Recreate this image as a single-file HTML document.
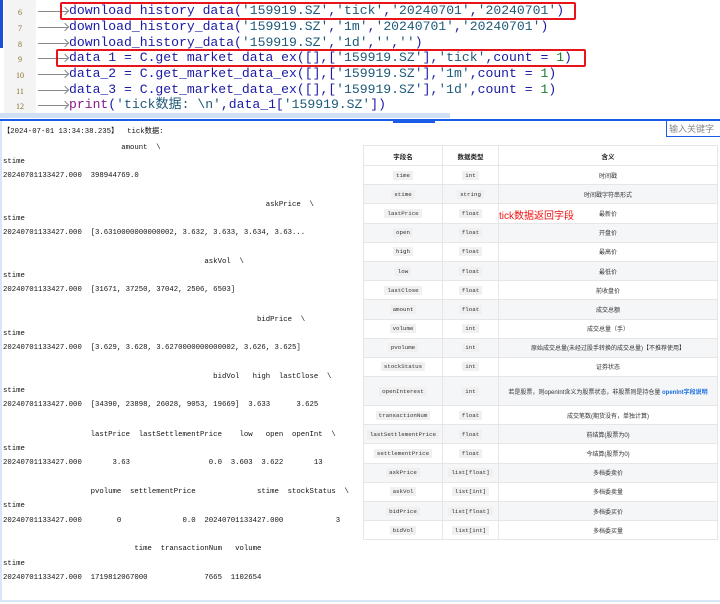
<!DOCTYPE html>
<html><head><meta charset="utf-8"><style>
*{margin:0;padding:0;box-sizing:border-box}
body{width:720px;height:604px;position:relative;background:#fff;overflow:hidden;font-family:"Liberation Mono","Noto Sans CJK SC",monospace}
.ln{position:absolute;left:4px;width:32px;text-align:center;font-size:8px;color:#8a6d2a;font-family:"Liberation Serif",serif}
.ar{position:absolute;left:38px;width:30px;height:1px;background:#888}
.ar:after{content:"";position:absolute;right:0;top:-3px;width:5px;height:5px;border-top:1px solid #888;border-right:1px solid #888;transform:rotate(45deg)}
.cd{position:absolute;left:69px;font-size:13.1px;color:#1a1aa6;white-space:pre;line-height:16px}
.s{color:#1d5a7a}.p{color:#8b1a8b}.n{color:#1a7a3a}
.o{position:absolute;left:3px;font-size:7.3px;color:#111;white-space:pre;line-height:9px;font-family:"Liberation Mono","Noto Sans CJK SC",monospace}
table{position:absolute;left:363px;top:145px;width:355px;border-collapse:collapse;font-size:6px;font-family:"Liberation Sans","Noto Sans CJK SC",sans-serif;color:#333;text-align:center}
td,th{border:1px solid #e6e6e6;height:19.2px;padding:0 2px}
th{font-size:6.5px;font-weight:bold;color:#222;height:20px}
tr:nth-child(odd) td{background:#f5f6f8}
td c{background:#f0f0f0;padding:1px 3px;font-family:"Liberation Mono",monospace;font-size:5.8px}
</style></head><body>
<div style="position:absolute;left:0;top:0;width:720px;height:118px;background:#fff"></div>
<div style="position:absolute;left:4px;top:0;width:32px;height:113px;background:#f4f4f4"></div>
<div style="position:absolute;left:0;top:0;width:3px;height:48px;background:#1a4fd8"></div>
<div style="position:absolute;left:0;top:113px;width:450px;height:5px;background:#cfe0f5"></div>
<div style="position:absolute;left:0;top:119px;width:720px;height:2px;background:#1a5ce8"></div>
<div style="position:absolute;left:393px;top:119px;width:42px;height:4px;background:#1a5ce8"></div>
<div style="position:absolute;left:0;top:121px;width:2px;height:480px;background:#d8e6f7"></div>
<div style="position:absolute;left:0;top:600px;width:720px;height:2px;background:#d8e6f7"></div>
<div style="position:absolute;left:666px;top:120px;width:56px;height:17px;border:1px solid #1a5ce8;font-size:9px;color:#888;font-family:'Noto Sans CJK SC',sans-serif;line-height:15px;padding-left:2px">输入关键字</div>

<div class="ln" style="top:8px">6</div><div class="ar" style="top:11px"></div>
<div class="ln" style="top:24px">7</div><div class="ar" style="top:27px"></div>
<div class="ln" style="top:40px">8</div><div class="ar" style="top:43px"></div>
<div class="ln" style="top:55px">9</div><div class="ar" style="top:58px"></div>
<div class="ln" style="top:71px">10</div><div class="ar" style="top:74px"></div>
<div class="ln" style="top:87px">11</div><div class="ar" style="top:90px"></div>
<div class="ln" style="top:102px">12</div><div class="ar" style="top:105px"></div>

<div class="cd" style="top:3px">download history data(<span class="s">'159919.SZ'</span>,<span class="s">'tick'</span>,<span class="s">'20240701'</span>,<span class="s">'20240701'</span>)</div>
<div class="cd" style="top:19px">download_history_data(<span class="s">'159919.SZ'</span>,<span class="s">'1m'</span>,<span class="s">'20240701'</span>,<span class="s">'20240701'</span>)</div>
<div class="cd" style="top:35px">download_history_data(<span class="s">'159919.SZ'</span>,<span class="s">'1d'</span>,<span class="s">''</span>,<span class="s">''</span>)</div>
<div class="cd" style="top:50px">data 1 = C.get market data ex([],[<span class="s">'159919.SZ'</span>],<span class="s">'tick'</span>,count = <span class="n">1</span>)</div>
<div class="cd" style="top:66px">data_2 = C.get_market_data_ex([],[<span class="s">'159919.SZ'</span>],<span class="s">'1m'</span>,count = <span class="n">1</span>)</div>
<div class="cd" style="top:82px">data_3 = C.get_market_data_ex([],[<span class="s">'159919.SZ'</span>],<span class="s">'1d'</span>,count = <span class="n">1</span>)</div>
<div class="cd" style="top:97px"><span class="p">print</span>(<span class="s">'tick数据: \n'</span>,data_1[<span class="s">'159919.SZ'</span>])</div>
<div style="position:absolute;left:60px;top:2px;width:516px;height:18px;border:2px solid #e8141a;border-radius:2px"></div>
<div style="position:absolute;left:56px;top:49px;width:530px;height:18px;border:2px solid #e8141a;border-radius:2px"></div>

<div class="o" style="top:128px">【2024-07-01 13:34:38.235】  tick数据:</div>
<div class="o" style="top:144px">                           amount  \</div>
<div class="o" style="top:158px">stime</div>
<div class="o" style="top:172px">20240701133427.000  398944769.0</div>
<div class="o" style="top:201px">                                                            askPrice  \</div>
<div class="o" style="top:215px">stime</div>
<div class="o" style="top:229px">20240701133427.000  [3.6310000000000002, 3.632, 3.633, 3.634, 3.63...</div>
<div class="o" style="top:258px">                                              askVol  \</div>
<div class="o" style="top:272px">stime</div>
<div class="o" style="top:286px">20240701133427.000  [31671, 37250, 37042, 2506, 6503]</div>
<div class="o" style="top:316px">                                                          bidPrice  \</div>
<div class="o" style="top:330px">stime</div>
<div class="o" style="top:344px">20240701133427.000  [3.629, 3.628, 3.6270000000000002, 3.626, 3.625]</div>
<div class="o" style="top:373px">                                                bidVol   high  lastClose  \</div>
<div class="o" style="top:387px">stime</div>
<div class="o" style="top:401px">20240701133427.000  [34390, 23898, 26028, 9053, 19669]  3.633      3.625</div>
<div class="o" style="top:431px">                    lastPrice  lastSettlementPrice    low   open  openInt  \</div>
<div class="o" style="top:445px">stime</div>
<div class="o" style="top:459px">20240701133427.000       3.63                  0.0  3.603  3.622       13</div>
<div class="o" style="top:488px">                    pvolume  settlementPrice              stime  stockStatus  \</div>
<div class="o" style="top:502px">stime</div>
<div class="o" style="top:517px">20240701133427.000        0              0.0  20240701133427.000            3</div>
<div class="o" style="top:545px">                              time  transactionNum   volume</div>
<div class="o" style="top:560px">stime</div>
<div class="o" style="top:574px">20240701133427.000  1719812067000             7665  1102654</div>

<table>
<tr><th style="width:79px">字段名</th><th style="width:56px">数据类型</th><th>含义</th></tr>
<tr><td><c>time</c></td><td><c>int</c></td><td>时间戳</td></tr>
<tr><td><c>stime</c></td><td><c>string</c></td><td>时间戳字符串形式</td></tr>
<tr><td><c>lastPrice</c></td><td><c>float</c></td><td style="position:relative"><span style="position:absolute;left:0;top:3px;color:#f01010;font-size:10px">tick数据返回字段</span>最新价</td></tr>
<tr><td><c>open</c></td><td><c>float</c></td><td>开盘价</td></tr>
<tr><td><c>high</c></td><td><c>float</c></td><td>最高价</td></tr>
<tr><td><c>low</c></td><td><c>float</c></td><td>最低价</td></tr>
<tr><td><c>lastClose</c></td><td><c>float</c></td><td>前收盘价</td></tr>
<tr><td><c>amount</c></td><td><c>float</c></td><td>成交总额</td></tr>
<tr><td><c>volume</c></td><td><c>int</c></td><td>成交总量（手）</td></tr>
<tr><td><c>pvolume</c></td><td><c>int</c></td><td>原始成交总量(未经过股手转换的成交总量)【不推荐使用】</td></tr>
<tr><td><c>stockStatus</c></td><td><c>int</c></td><td>证券状态</td></tr>
<tr><td style="height:29px"><c>openInterest</c></td><td><c>int</c></td><td>若是股票，则openInt含义为股票状态，非股票则是持仓量 <span style="color:#1a6fe0;font-weight:bold">openInt字段说明</span></td></tr>
<tr><td><c>transactionNum</c></td><td><c>float</c></td><td>成交笔数(期货没有，单独计算)</td></tr>
<tr><td><c>lastSettlementPrice</c></td><td><c>float</c></td><td>前结算(股票为0)</td></tr>
<tr><td><c>settlementPrice</c></td><td><c>float</c></td><td>今结算(股票为0)</td></tr>
<tr><td><c>askPrice</c></td><td><c>list[float]</c></td><td>多档委卖价</td></tr>
<tr><td><c>askVol</c></td><td><c>list[int]</c></td><td>多档委卖量</td></tr>
<tr><td><c>bidPrice</c></td><td><c>list[float]</c></td><td>多档委买价</td></tr>
<tr><td><c>bidVol</c></td><td><c>list[int]</c></td><td>多档委买量</td></tr>
</table>
</body></html>
